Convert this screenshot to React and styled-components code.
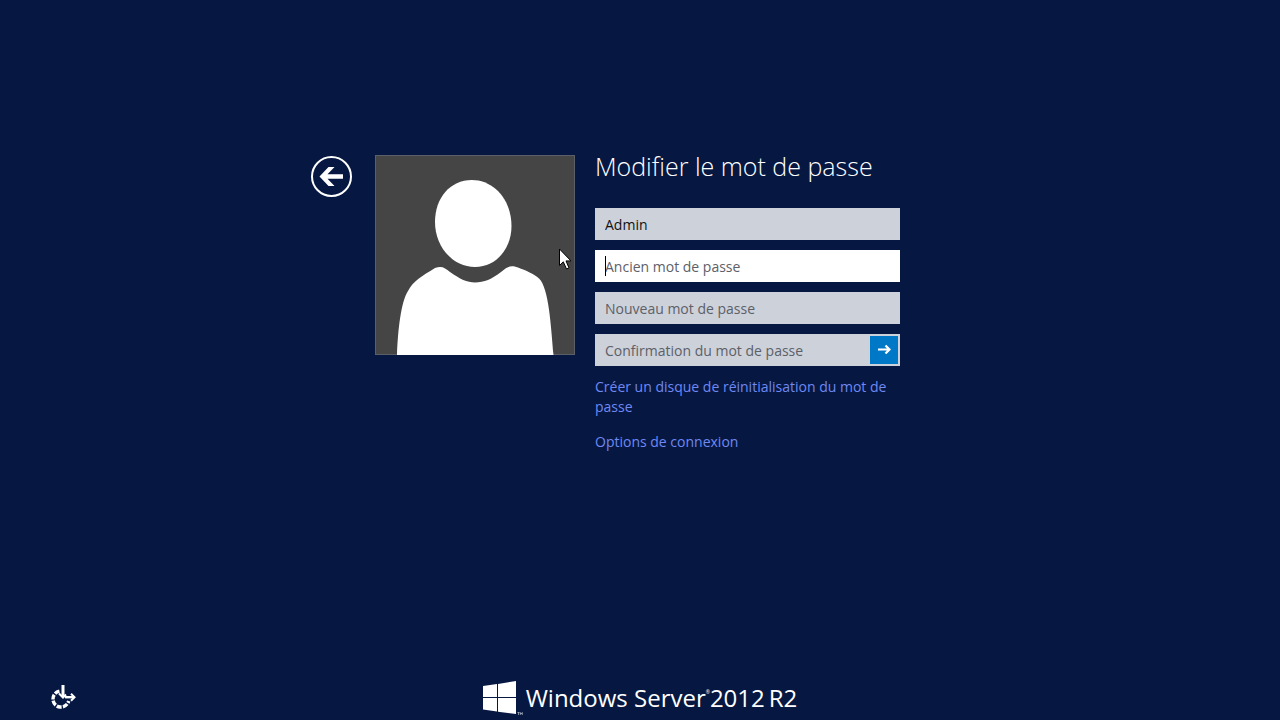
import styled, { createGlobalStyle } from "styled-components";

const GlobalStyle = createGlobalStyle`
  * {
    box-sizing: border-box;
  }
  body {
    margin: 0;
    background-color: #061842;
    color: white;
    font-family: "Open Sans", "Noto Sans", sans-serif;
  }
  button, input {
    font-family: inherit;
    border: none;
    border-radius: 0;
    padding: 0;
  }
`;

const Page = styled.div`
  min-height: 100vh;
  display: flex;
  flex-direction: column;
  justify-content: space-between;
`;
const Main = styled.main`
  display: grid;
  grid-template-columns: 1fr auto 1fr;
  padding-top: 155px;
`;
const BackButton = styled.button`
  width: 42px;
  height: 42px;
  margin-right: 22px;
  justify-self: end;
  background: none;
  color: white;

  svg {
    display: block;
  }
`;
const Account = styled.div`
  display: flex;
  align-items: flex-start;
  gap: 20px;
`;
const Picture = styled.div`
  position: relative;
  width: 200px;
  height: 200px;
  background-color: #454545;
`;
const Person = styled.svg`
  display: block;
  width: 100%;
  height: 100%;
`;
const Pointer = styled.svg`
  position: absolute;
  right: 4px;
  top: 93px;
`;
const Form = styled.form`
  width: 310px;
  padding-right: 5px;
  display: flex;
  flex-direction: column;
  gap: 10px;
`;
const Title = styled.h1`
  height: 43px;
  margin: 0;
  line-height: 22px;
  font-size: 25px;
  font-weight: 300;
  white-space: nowrap;
`;
const Field = styled.div`
  position: relative;
  height: 32px;
  padding: 2px;
  display: flex;
  background-color: ${(props) => (props.$active ? "white" : "#cdd1da")};
`;
const Input = styled.input`
  flex: 1;
  min-width: 0;
  padding-left: 8px;
  background: none;
  color: #111;
  outline: none;
  font-size: 14px;

  &::placeholder {
    color: #5c6068;
    opacity: 1;
  }
`;
const Caret = styled.span`
  position: absolute;
  left: 10px;
  top: 6px;
  width: 1px;
  height: 20px;
  background-color: black;
`;
const Submit = styled.button`
  width: 28px;
  height: 28px;
  display: flex;
  align-items: center;
  justify-content: center;
  background-color: #0078c8;
  color: white;
`;
const Links = styled.nav`
  display: flex;
  flex-direction: column;
  align-items: flex-start;
  gap: 15px;
  padding-top: 1px;
`;
const LinkText = styled.a`
  color: #6f88f2;
  font-size: 14px;
  line-height: 20px;
  text-decoration: none;
`;
const Footer = styled.footer`
  display: grid;
  grid-template-columns: 1fr auto 1fr;
  align-items: center;
  padding: 0 50px 4px;
`;
const AccessButton = styled.button`
  width: 26px;
  height: 26px;
  background: none;
  color: white;

  svg {
    display: block;
  }
`;
const Brand = styled.div`
  display: flex;
  align-items: center;
  height: 36px;
  gap: 3px;
`;
const BrandName = styled.span`
  display: flex;
  font-size: 24px;
  line-height: 36px;
  white-space: nowrap;
`;
const Mark = styled.small`
  font-size: 5px;
  line-height: 24px;
`;
const Release = styled.span`
  margin-left: 4px;
`;

const fields = [
  { id: "user", label: "Nom d'utilisateur", type: "text", value: "Admin" },
  { id: "old", label: "Ancien mot de passe", type: "password", active: true },
  { id: "new", label: "Nouveau mot de passe", type: "password" },
  { id: "confirm", label: "Confirmation du mot de passe", type: "password", submit: true },
];

function App() {
  return (
    <>
      <GlobalStyle />
      <Page>
        <Main>
          <BackButton type="button" aria-label="Retour">
            <svg width="42" height="42" viewBox="0 0 42 42" fill="none">
              <circle cx="20.5" cy="21.5" r="19.5" stroke="currentColor" strokeWidth="2" />
              <path d="M8.500 21.500 17.500 12h6l-7 7.200H32v4.600H16.500l7 7.200h-6z" fill="currentColor" />
            </svg>
          </BackButton>
          <Account>
            <Picture>
              <Person viewBox="0 0 200 200" fill="white">
                <rect x=".5" y=".5" width="199" height="199" fill="none" stroke="#5a5f68" />
                <path d="M97 25C118 25 136.500 44 136.500 71C136.500 94 121 112 100 112C78 112 60 92 60 67C60 43 75 25 97 25Z" />
                <path d="M22 200C23 174 26 147 33 136C38 126 47 121 60 113C67 110.500 70 113 75 117C85 124 92 127.500 100 127.500C109 127.500 117 124 126 117C133 111 136 110 143 112.500C151 115.500 159 119 164 123.500C174 133 176 172 178.500 200Z" />
              </Person>
              <Pointer width="12" height="22" viewBox="0 0 12 22">
                <path d="M.5 1v16.500l3.800-3.700 3.200 7.200 2.500-1.100-3-7h5z" fill="white" stroke="black" />
              </Pointer>
            </Picture>
            <Form onSubmit={(e) => e.preventDefault()}>
              <Title>Modifier le mot de passe</Title>
              {fields.map((field) => (
                <Field key={field.id} $active={field.active}>
                  <Input
                    id={field.id}
                    type={field.type}
                    aria-label={field.label}
                    placeholder={field.label}
                    defaultValue={field.value}
                  />
                  {field.active && <Caret />}
                  {field.submit && (
                    <Submit type="submit" aria-label="Valider">
                      <svg width="14" height="12" viewBox="0 0 14 12" fill="none" stroke="currentColor" strokeWidth="2.2">
                        <path d="M1 5.500h11.500M8.500 1.500l4 4-4 4" />
                      </svg>
                    </Submit>
                  )}
                </Field>
              ))}
              <Links>
                <LinkText href="#disque">Créer un disque de réinitialisation du mot de passe</LinkText>
                <LinkText href="#options">Options de connexion</LinkText>
              </Links>
            </Form>
          </Account>
        </Main>
        <Footer>
          <AccessButton type="button" aria-label="Options d'ergonomie">
            <svg width="26" height="26" viewBox="0 0 26 26" fill="none" stroke="currentColor">
              <path
                d="M9.400 6.200A8 8 0 1 0 18.700 16"
                strokeWidth="3.400"
                strokeDasharray="5 1.300"
              />
              <path d="M13 0v11" strokeWidth="3" />
              <path d="M15 12.200h9" strokeWidth="2.400" />
              <path d="M9 8.500 13 12.500 16 9.500M21 8.700l3.500 3.500-3.500 3.500" strokeWidth="2" />
            </svg>
          </AccessButton>
          <Brand>
            <svg width="40" height="34" viewBox="0 0 40 34" fill="white">
              <path d="M0 5 14 3v13H0zM15 2.900 33 0v16H15zM0 17h14v13.500L0 28.500zM15 17h18v16L15 30.700z" />
              <path d="M34.500 31.500h2M35.500 31.500v2.500M37.300 34v-2.500l1 1.500 1-1.500V34" fill="none" stroke="white" strokeWidth=".5" />
            </svg>
            <BrandName>
              Windows Server<Mark>®</Mark>2012<Release>R2</Release>
            </BrandName>
          </Brand>
        </Footer>
      </Page>
    </>
  );
}

export default App;
